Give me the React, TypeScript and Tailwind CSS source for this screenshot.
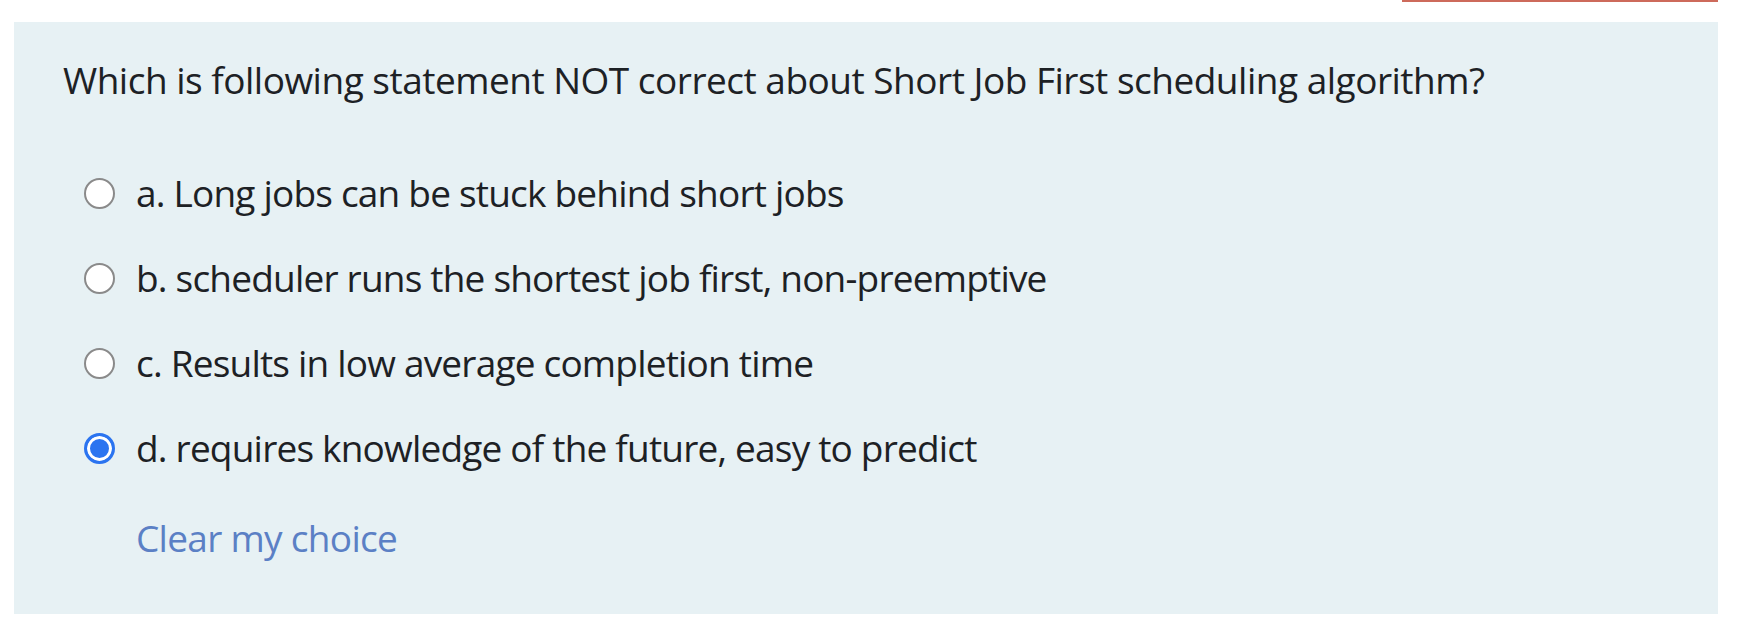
const options = [
  { id: "a", text: "a. Long jobs can be stuck behind short jobs" },
  { id: "b", text: "b. scheduler runs the shortest job first, non-preemptive" },
  { id: "c", text: "c. Results in low average completion time" },
  { id: "d", text: "d. requires knowledge of the future, easy to predict" },
];

function Radio({ checked }: { checked: boolean }) {
  if (checked) {
    return (
      <span className="w-[31px] h-[31px] shrink-0 rounded-full border-[3px] border-[#2b74f0] bg-[#2b74f0] shadow-[inset_0_0_0_3px_#ffffff]" />
    );
  }
  return (
    <span className="w-[31px] h-[31px] shrink-0 rounded-full border-[2.5px] border-[#8a8a8a] bg-white" />
  );
}

export default function App() {
  const selected = "d";
  return (
    <div className="w-[1738px] h-[632px] bg-white pl-[14px] pr-[20px] font-['Open_Sans',sans-serif] text-[37px] tracking-[-0.5px] leading-[56px] text-[#1d2125]">
      <div className="flex justify-end">
        <div className="w-[316px] h-[2px] bg-[#cd6a5b]" />
      </div>
      <div className="mt-[20px] h-[592px] bg-[#e7f1f4] pl-[49px] pt-[30px]">
        <p>Which is following statement NOT correct about Short Job First scheduling algorithm?</p>
        <div className="mt-[57px] flex flex-col gap-[29px] pl-[21px] tracking-[-0.8px]">
          {options.map((o) => (
            <label key={o.id} className="flex items-center gap-[21px]">
              <Radio checked={o.id === selected} />
              <span>{o.text}</span>
            </label>
          ))}
        </div>
        <div className="mt-[34px] pl-[73px] tracking-[-0.7px]">
          <a className="text-[#5b80c5]">Clear my choice</a>
        </div>
      </div>
    </div>
  );
}
